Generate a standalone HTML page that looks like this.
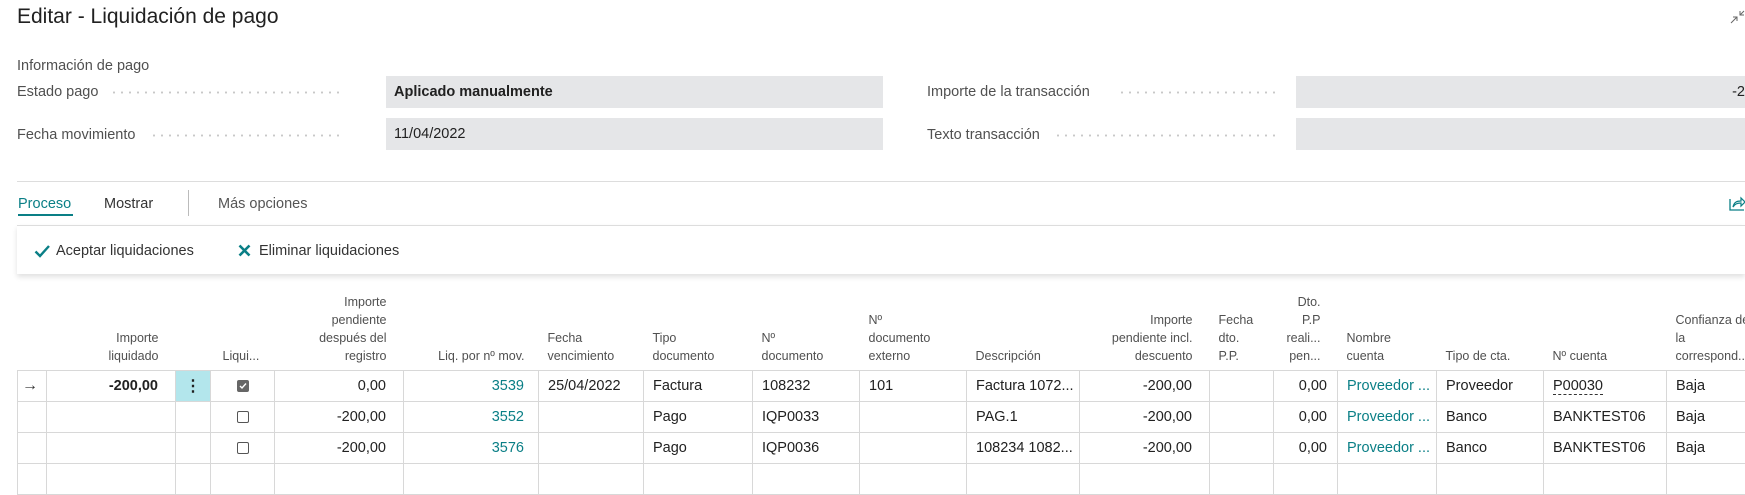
<!DOCTYPE html>
<html><head><meta charset="utf-8"><style>
*{margin:0;padding:0;box-sizing:border-box}
body{width:1745px;height:473px;overflow:hidden;background:#fff;font-family:"Liberation Sans",sans-serif;color:#212121;position:relative}
.a{position:absolute;white-space:nowrap}
.lbl{font-size:14.5px;color:#505050}
.dots{height:3px;background-image:radial-gradient(circle,#c8c8c8 1px,transparent 1.2px);background-size:8px 3px}
.box{background:#e5e6e8;height:32px;font-size:14.5px;line-height:32px;padding-left:8px}
table{position:absolute;left:17px;top:0;width:1719px;border-collapse:collapse;table-layout:fixed;font-size:14.5px}
th{font-weight:normal;font-size:12.5px;color:#505050;line-height:18px;vertical-align:bottom;padding:0 8px 5px 9px;height:370px;white-space:normal}
td{border:1px solid #d8d8d8;height:31px;padding:0 8px 0 9px;white-space:nowrap;overflow:hidden}
td.r,th.r{text-align:right;padding-right:17px}
td.r.t{padding-right:14px}
.t{color:#0a7f86}
.cb{display:inline-block;width:12px;height:12px;border:1.3px solid #555;border-radius:2px;vertical-align:middle}
.cbk{background:#666;border-color:#666;position:relative}
</style></head><body>
<div class="a" style="left:17px;top:5px;font-size:21px;color:#212121">Editar - Liquidación de pago</div>
<svg class="a" style="left:1729px;top:9px" width="16" height="16" viewBox="0 0 16 16"><path d="M2 14 L8 8 M4 8 H8 V12" stroke="#666" stroke-width="1" fill="none"/><path d="M15 2 L11 6 M11 2 V6 H15" stroke="#666" stroke-width="1" fill="none"/></svg>
<div class="a" style="left:17px;top:58px;font-size:14.5px;color:#505050">Información de pago</div>
<div class="a lbl" style="left:17px;top:84px">Estado pago</div>
<div class="a dots" style="left:110px;top:91px;width:232px"></div>
<div class="a box" style="left:386px;top:76px;width:497px;font-weight:bold">Aplicado manualmente</div>
<div class="a lbl" style="left:17px;top:127px">Fecha movimiento</div>
<div class="a dots" style="left:150px;top:134px;width:192px"></div>
<div class="a box" style="left:386px;top:118px;width:497px">11/04/2022</div>
<div class="a lbl" style="left:927px;top:84px">Importe de la transacción</div>
<div class="a dots" style="left:1118px;top:91px;width:163px"></div>
<div class="a box" style="left:1296px;top:76px;width:449px;text-align:right;padding-right:0">-2</div>
<div class="a lbl" style="left:927px;top:127px">Texto transacción</div>
<div class="a dots" style="left:1054px;top:134px;width:227px"></div>
<div class="a box" style="left:1296px;top:118px;width:449px"></div>
<div class="a" style="left:17px;top:181px;width:1728px;border-top:1px solid #ddd"></div>
<div class="a" style="left:18px;top:196px;font-size:14.5px;color:#0a7f86">Proceso</div>
<div class="a" style="left:18px;top:214px;width:55px;border-top:2px solid #0a7f86"></div>
<div class="a" style="left:104px;top:196px;font-size:14.5px;color:#333">Mostrar</div>
<div class="a" style="left:188px;top:190px;height:26px;border-left:1px solid #bbb"></div>
<div class="a" style="left:218px;top:196px;font-size:14.5px;color:#555">Más opciones</div>
<svg class="a" style="left:1729px;top:194px" width="16" height="18" viewBox="0 0 16 18"><path d="M1 5 V16 H15" stroke="#0a7f86" stroke-width="1.3" fill="none"/><path d="M4 13 C5 8 8 7 12 7 V4 L16 8 L12 12 V9 C8 9 6 10 4 13Z" stroke="#0a7f86" stroke-width="1.2" fill="none"/></svg>
<div class="a" style="left:17px;top:225px;width:1728px;height:49px;border-top:1px solid #ddd;box-shadow:0 3px 5px rgba(0,0,0,0.12);background:#fff"></div>
<svg class="a" style="left:34px;top:244px" width="16" height="14" viewBox="0 0 16 14"><path d="M1.5 7.5 L6 12 L15 2" stroke="#0a7f86" stroke-width="2.4" fill="none"/></svg>
<div class="a" style="left:56px;top:243px;font-size:14.5px;color:#333">Aceptar liquidaciones</div>
<svg class="a" style="left:238px;top:244px" width="13" height="13" viewBox="0 0 13 13"><path d="M1.5 1.5 L11.5 11.5 M11.5 1.5 L1.5 11.5" stroke="#0a7f86" stroke-width="2.6" fill="none"/></svg>
<div class="a" style="left:259px;top:243px;font-size:14.5px;color:#333">Eliminar liquidaciones</div>
<table>
<colgroup><col style="width:29px"><col style="width:129px"><col style="width:35px"><col style="width:64px"><col style="width:129px"><col style="width:135px"><col style="width:105px"><col style="width:109px"><col style="width:107px"><col style="width:107px"><col style="width:113px"><col style="width:130px"><col style="width:64px"><col style="width:64px"><col style="width:99px"><col style="width:107px"><col style="width:123px"><col style="width:100px"></colgroup>
<tr><th></th><th class="r">Importe<br>liquidado</th><th></th><th style="text-align:left;padding-left:12px">Liqui...</th><th class="r">Importe<br>pendiente<br>después del<br>registro</th><th class="r" style="padding-right:14px">Liq. por nº mov.</th><th style="text-align:left">Fecha<br>vencimiento</th><th style="text-align:left">Tipo<br>documento</th><th style="text-align:left">Nº<br>documento</th><th style="text-align:left">Nº<br>documento<br>externo</th><th style="text-align:left">Descripción</th><th class="r">Importe<br>pendiente incl.<br>descuento</th><th style="text-align:left">Fecha<br>dto.<br>P.P.</th><th class="r">Dto.<br>P.P<br>reali...<br>pen...</th><th style="text-align:left">Nombre<br>cuenta</th><th style="text-align:left">Tipo de cta.</th><th style="text-align:left">Nº cuenta</th><th style="text-align:left;white-space:nowrap;padding-right:0">Confianza de<br>la<br>correspond...</th></tr>
<tr><td style="padding:0 4px;color:#333;font-size:16px">&#8594;</td><td class="r" style="font-weight:bold">-200,00</td><td style="background:#b3e6ec;text-align:center;font-weight:bold;font-size:16px;padding:0">&#8942;</td><td style="text-align:center;padding:0"><span class="cb cbk"><svg style="position:absolute;left:1px;top:1px" width="8" height="8" viewBox="0 0 8 8"><path d="M1 4 L3 6 L7 1.5" stroke="#fff" stroke-width="1.4" fill="none"/></svg></span></td><td class="r">0,00</td><td class="r t">3539</td><td>25/04/2022</td><td>Factura</td><td>108232</td><td>101</td><td>Factura 1072...</td><td class="r">-200,00</td><td></td><td class="r" style="padding-right:10px">0,00</td><td class="t">Proveedor ...</td><td>Proveedor</td><td><span style="border-bottom:1px dashed #333">P00030</span></td><td>Baja</td></tr>
<tr><td></td><td></td><td></td><td style="text-align:center;padding:0"><span class="cb"></span></td><td class="r">-200,00</td><td class="r t">3552</td><td></td><td>Pago</td><td>IQP0033</td><td></td><td>PAG.1</td><td class="r">-200,00</td><td></td><td class="r" style="padding-right:10px">0,00</td><td class="t">Proveedor ...</td><td>Banco</td><td>BANKTEST06</td><td>Baja</td></tr>
<tr><td></td><td></td><td></td><td style="text-align:center;padding:0"><span class="cb"></span></td><td class="r">-200,00</td><td class="r t">3576</td><td></td><td>Pago</td><td>IQP0036</td><td></td><td>108234 1082...</td><td class="r">-200,00</td><td></td><td class="r" style="padding-right:10px">0,00</td><td class="t">Proveedor ...</td><td>Banco</td><td>BANKTEST06</td><td>Baja</td></tr>
<tr><td></td><td></td><td></td><td></td><td></td><td></td><td></td><td></td><td></td><td></td><td></td><td></td><td></td><td></td><td></td><td></td><td></td><td></td></tr>
</table>
</body></html>
